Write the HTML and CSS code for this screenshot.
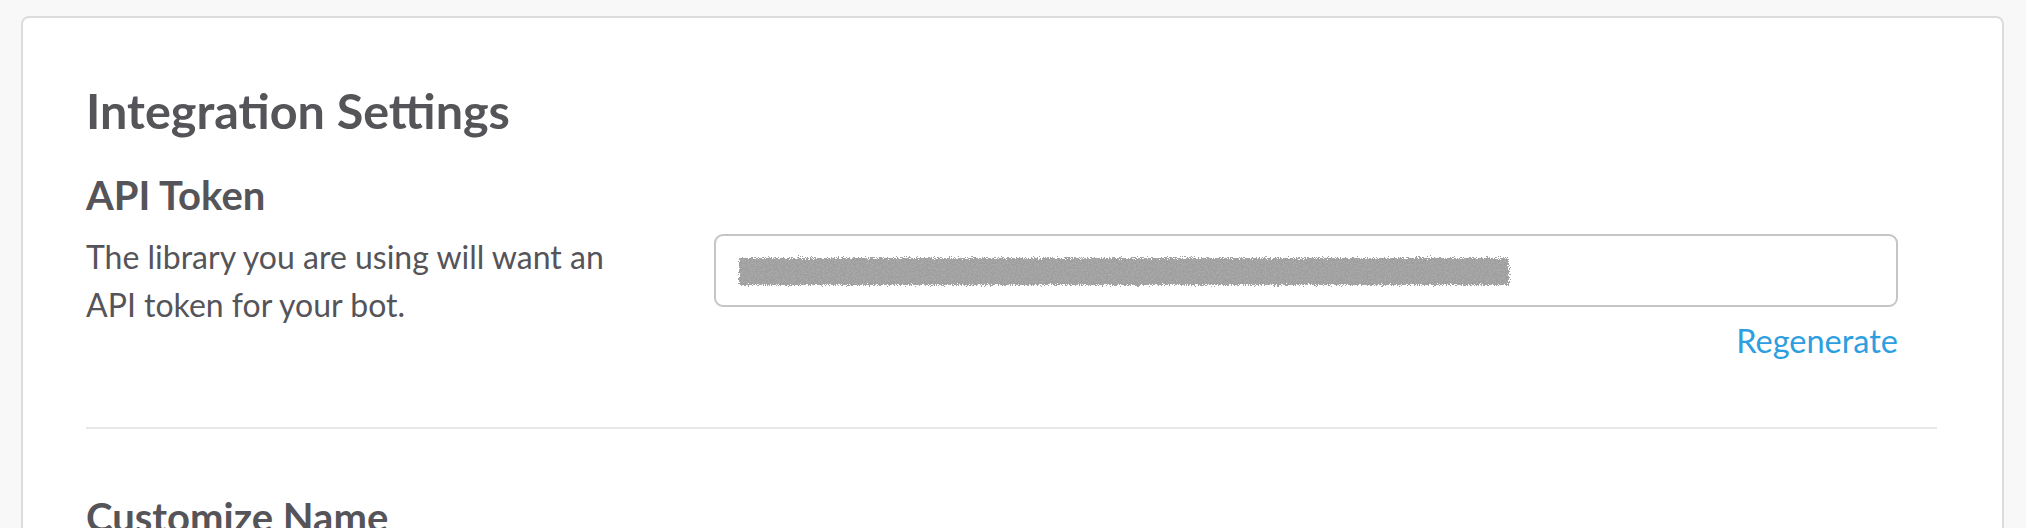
FILE: index.html
```html
<!DOCTYPE html>
<html lang="en">
<head>
  <meta charset="UTF-8">
  <title>Integration Settings</title>
  <link rel="stylesheet" href="styles.css">
</head>
<body>
  <div class="card">
    <h1>Integration Settings</h1>

    <section class="section">
      <h2>API Token</h2>
      <div class="row">
        <p class="desc">The library you are using will want an API token for your bot.</p>
        <div class="field">
          <div class="token-box">
            <svg class="redacted" width="778" height="36" viewBox="0 0 778 36">
              <defs>
                <filter id="rough" x="-2%" y="-30%" width="104%" height="160%">
                  <feTurbulence type="fractalNoise" baseFrequency="1.1" numOctaves="2" seed="7" result="noise"/>
                  <feDisplacementMap in="SourceGraphic" in2="noise" scale="7" result="moved"/>
                  <feTurbulence type="fractalNoise" baseFrequency="0.6" numOctaves="1" seed="3" result="grain"/>
                  <feColorMatrix in="grain" type="matrix" values="0 0 0 0 0.35  0 0 0 0 0.35  0 0 0 0 0.35  0 0 0 -9 5.2" result="specks"/>
                  <feComposite in="specks" in2="moved" operator="in" result="dots"/>
                  <feMerge>
                    <feMergeNode in="moved"/>
                    <feMergeNode in="dots"/>
                  </feMerge>
                </filter>
              </defs>
              <rect x="4" y="5" width="770" height="27" fill="#a8a8a8" filter="url(#rough)"/>
            </svg>
          </div>
          <a class="link" href="#">Regenerate</a>
        </div>
      </div>
    </section>

    <hr class="divider">

    <section class="section">
      <h2>Customize Name</h2>
    </section>
  </div>
</body>
</html>
```

FILE: styles.css
```css
body {
  margin: 0;
  background-color: #f8f8f8;
  font-family: Lato, "Open Sans", sans-serif;
  color: #555459;
}

.card {
  margin: 16px 22px 0 21px;
  padding: 63px 65px 40px 63px;
  background-color: white;
  border: 2px solid #dcdcdc;
  border-radius: 8px;
  height: 600px;
}

h1 {
  margin: 0;
  font-size: 48.5px;
  font-weight: 700;
  line-height: 1.2;
}

h2 {
  margin: 0;
  font-size: 40px;
  font-weight: 700;
  line-height: 1.2;
}

.section {
  margin-top: 32px;
}

.row {
  display: flex;
  margin-top: 14px;
  padding-right: 39px;
}

.desc {
  margin: 0;
  width: 545px;
  font-size: 32px;
  line-height: 48px;
}

.field {
  margin-left: auto;
  width: 1184px;
  display: flex;
  flex-direction: column;
  align-items: flex-end;
}

.token-box {
  box-sizing: border-box;
  width: 100%;
  height: 73px;
  border: 2px solid #c5c5c5;
  border-radius: 9px;
  display: flex;
  align-items: center;
  padding-left: 19px;
  margin-top: 1px;
}

.redacted {
  display: block;
}

.link {
  margin-top: 10px;
  font-size: 32.5px;
  line-height: 48px;
  color: #2d9ee0;
  text-decoration: none;
}

.divider {
  margin: 62px 0 0 0;
  border: none;
  border-top: 2px solid #e8e8e8;
}

.divider + .section {
  margin-top: 64px;
}
```
